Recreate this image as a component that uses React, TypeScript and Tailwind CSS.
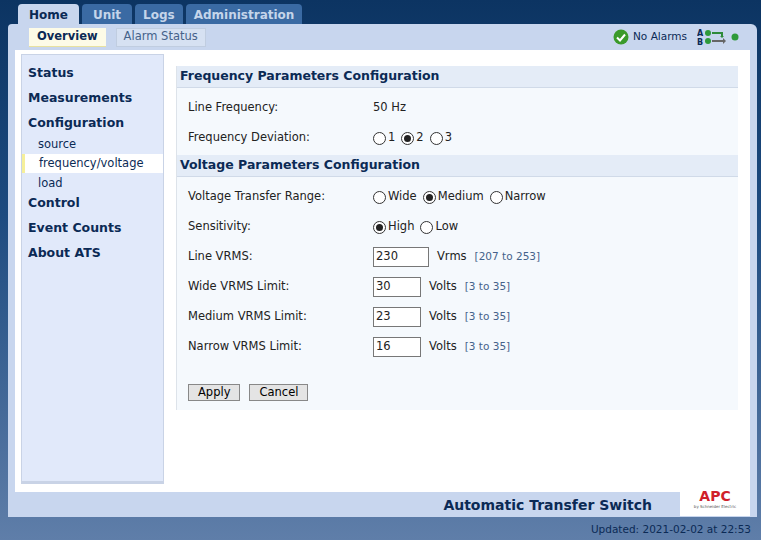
import React from "react";

const F = { fontFamily: "Tahoma, 'DejaVu Sans', Verdana, sans-serif" };

function Radio({ on, label }: { on?: boolean; label: string }) {
  return (
    <span className="inline-flex items-center mr-[6px]">
      <span className="w-[13px] h-[13px] rounded-full border border-[#333] bg-white flex items-center justify-center mr-[2px]">
        {on && <span className="w-[7px] h-[7px] rounded-full bg-[#222]" />}
      </span>
      {label}
    </span>
  );
}

function Row({ label, children }: { label: string; children: React.ReactNode }) {
  return (
    <div className="flex items-center h-[30px] text-[11.5px] text-[#222]">
      <div className="w-[196px] pl-[11px]">{label}</div>
      <div className="flex items-center">{children}</div>
    </div>
  );
}

function Inp({ v, w }: { v: string; w: number }) {
  return (
    <span style={{ width: w }} className="h-[20px] border border-[#777] bg-white inline-flex items-center px-[2px] text-[11.5px] mr-[8px]">{v}</span>
  );
}

export default function App() {
  return (
    <div style={F} className="w-[761px] h-[540px] bg-[linear-gradient(#0c3462,#1d4b80_40%,#5f7ea9)] relative overflow-hidden">
      <div className="flex pl-[18px] pt-[4px] h-[24px] gap-[3px] text-[12px] font-bold">
        <div className="px-[11px] bg-[#c8d6ee] text-[#0b2a55] rounded-t-[4px] pt-[2px]">Home</div>
        <div className="px-[11px] bg-[#3a6aa3] text-[#c5d5ea] rounded-t-[4px] pt-[2px]">Unit</div>
        <div className="px-[8px] bg-[#3a6aa3] text-[#c5d5ea] rounded-t-[4px] pt-[2px]">Logs</div>
        <div className="px-[8px] bg-[#3a6aa3] text-[#c5d5ea] rounded-t-[4px] pt-[2px]">Administration</div>
      </div>
      <div className="absolute left-[8px] top-[24px] w-[749px] h-[493px] bg-[#c8d6ee] rounded-tr-[6px] rounded-tl-[4px]">
        <div className="flex items-center h-[26px] pl-[21px] text-[11.5px]">
          <div className="px-[8px] h-[19px] flex items-center bg-[#fdfbe7] text-[#0b2a55] font-bold border-b border-[#e8e2a0]">Overview</div>
          <div className="ml-[10px] px-[7px] h-[19px] flex items-center bg-[#d6e1f2] text-[#45628a] border border-[#c0cde0]">Alarm Status</div>
          <div className="ml-auto flex items-center text-[10.5px] text-[#0b2a55] mr-[16px]">
            <svg width="16" height="16" viewBox="0 0 16 16" className="mr-[4px]"><circle cx="8" cy="8" r="7.5" fill="#3a9a2a"/><path d="M4 8.5l3 3 5-6" stroke="#fff" strokeWidth="2" fill="none"/></svg>
            No Alarms
            <svg width="44" height="18" viewBox="0 0 44 18" className="ml-[10px]">
              <text x="0" y="8" fontSize="8" fontWeight="bold" fill="#0b2a55">A</text>
              <text x="0" y="17" fontSize="8" fontWeight="bold" fill="#0b2a55">B</text>
              <circle cx="11" cy="5" r="3" fill="#2e9a3a"/><circle cx="11" cy="13" r="3" fill="#2e9a3a"/>
              <path d="M15 5h10v4" stroke="#2e8a3a" strokeWidth="2" fill="none"/><path d="M23 8l2 2 2-2" fill="#2e8a3a"/>
              <path d="M15 13h12" stroke="#666" strokeWidth="2"/><path d="M26 10l3 3-3 3z" fill="#666"/>
              <circle cx="38" cy="9" r="3.5" fill="#2e9a3a"/>
            </svg>
          </div>
        </div>
        <div className="absolute left-[7px] top-[26px] w-[735px] h-[442px] bg-white flex">
          <div className="ml-[6px] mt-[4px] w-[143px] h-[430px] bg-[#e1e9fa] border border-[#c9d3e6] border-b-[3px] pt-[9px] text-[#0b2a55]">
            <div className="pl-[6px] text-[12.5px] font-bold h-[25px]">Status</div>
            <div className="pl-[6px] text-[12.5px] font-bold h-[25px]">Measurements</div>
            <div className="pl-[6px] text-[12.5px] font-bold h-[21px]">Configuration</div>
            <div className="pl-[16px] text-[11.5px] h-[19px] flex items-center">source</div>
            <div className="pl-[14px] text-[11.5px] h-[19px] flex items-center bg-white border-l-[3px] border-[#f5ef9a]">frequency/voltage</div>
            <div className="pl-[16px] text-[11.5px] h-[21px] flex items-center">load</div>
            <div className="pl-[6px] text-[12.5px] font-bold h-[25px]">Control</div>
            <div className="pl-[6px] text-[12.5px] font-bold h-[25px]">Event Counts</div>
            <div className="pl-[6px] text-[12.5px] font-bold h-[25px]">About ATS</div>
          </div>
          <div className="ml-[12px] mt-[16px] w-[562px] h-[344px] bg-[#f5f9fd] border-l border-[#dde3ea]">
            <div className="h-[22px] bg-[#e4ecf7] border-b border-[#d0dae8] text-[12.5px] font-bold text-[#0b2a55] pl-[3px] flex items-center">Frequency Parameters Configuration</div>
            <div className="pt-[5px]">
              <Row label="Line Frequency:">50 Hz</Row>
              <Row label="Frequency Deviation:"><Radio label="1" /><Radio on label="2" /><Radio label="3" /></Row>
            </div>
            <div className="h-[22px] mt-[2px] bg-[#e4ecf7] border-b border-[#d0dae8] text-[12.5px] font-bold text-[#0b2a55] pl-[3px] flex items-center">Voltage Parameters Configuration</div>
            <div className="pt-[5px]">
              <Row label="Voltage Transfer Range:"><Radio label="Wide" /><Radio on label="Medium" /><Radio label="Narrow" /></Row>
              <Row label="Sensitivity:"><Radio on label="High" /><Radio label="Low" /></Row>
              <Row label="Line VRMS:"><Inp v="230" w={56} />Vrms<span className="ml-[8px] text-[10.5px] text-[#45628a]">[207 to 253]</span></Row>
              <Row label="Wide VRMS Limit:"><Inp v="30" w={48} />Volts<span className="ml-[8px] text-[10.5px] text-[#45628a]">[3 to 35]</span></Row>
              <Row label="Medium VRMS Limit:"><Inp v="23" w={48} />Volts<span className="ml-[8px] text-[10.5px] text-[#45628a]">[3 to 35]</span></Row>
              <Row label="Narrow VRMS Limit:"><Inp v="16" w={48} />Volts<span className="ml-[8px] text-[10.5px] text-[#45628a]">[3 to 35]</span></Row>
              <div className="flex gap-[9px] pl-[11px] mt-[22px] text-[11.5px]">
                <span className="px-[9px] h-[17px] flex items-center bg-[#e4e4e4] border border-[#888]">Apply</span>
                <span className="px-[9px] h-[17px] flex items-center bg-[#e4e4e4] border border-[#888]">Cancel</span>
              </div>
            </div>
          </div>
        </div>
        <div className="absolute left-[7px] top-[468px] w-[735px] h-[24px] flex">
          <div className="flex-1 text-right pr-[28px] text-[14px] font-bold text-[#0b2a55] pt-[3px]">Automatic Transfer Switch</div>
          <div className="w-[70px] h-[28px] bg-white flex flex-col items-center justify-start mt-[-4px] pt-[1px]">
            <span className="text-[14px] font-black text-[#d0202a] leading-[15px]" style={{ fontFamily: "'DejaVu Sans', sans-serif" }}>APC</span>
            <span className="text-[4px] leading-[5px] text-[#555]">by Schneider Electric</span>
          </div>
        </div>
      </div>
      <div className="absolute right-[10px] top-[522px] text-[10.5px] text-[#0b2a55]">Updated: 2021-02-02 at 22:53</div>
    </div>
  );
}
